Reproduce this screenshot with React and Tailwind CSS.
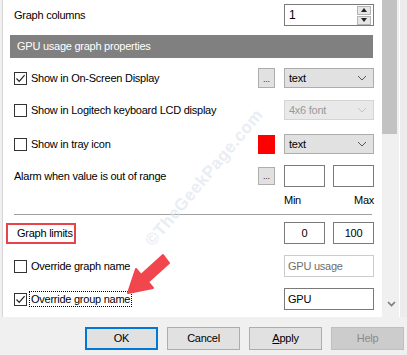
import React from 'react';

const font = { fontFamily: '"Liberation Sans", Arial, sans-serif' };

const Check = ({ checked }) => (
  <div className="w-[13px] h-[13px] border border-[#333333] bg-white flex items-center justify-center shrink-0">
    {checked && (
      <svg width="11" height="11" viewBox="0 0 11 11">
        <path d="M1.5 5.5 L4.2 8.3 L9.6 2.2" fill="none" stroke="#222" strokeWidth="1.2" />
      </svg>
    )}
  </div>
);

const Chevron = ({ color = '#555' }) => (
  <svg width="10" height="6" viewBox="0 0 10 6">
    <path d="M1 1 L5 5 L9 1" fill="none" stroke={color} strokeWidth="1" />
  </svg>
);

const Select = ({ value, disabled }) => (
  <div
    className={`w-[90px] h-[20px] border flex items-center justify-between pl-[4px] pr-[6px] ${
      disabled ? 'bg-[#e9e9e9] border-[#d4d4d4] text-[#9a9a9a]' : 'bg-[#e1e1e1] border-[#adadad] text-black'
    }`}
  >
    <span>{value}</span>
    <Chevron color={disabled ? '#c4c4c4' : '#555'} />
  </div>
);

const Dots = ({ small }) => (
  <div
    className={`w-[17px] ${small ? 'h-[18px]' : 'h-[20px]'} bg-[#e1e1e1] border border-[#adadad] flex items-end justify-center pb-[3px] text-[9px] leading-none text-[#333]`}
  >
    ...
  </div>
);

const Row = ({ left, mid, right, className = '' }) => (
  <div className={`flex items-center ${className}`}>
    <div className="w-[255px] pl-[11px] flex items-center">{left}</div>
    <div className="w-[17px] flex items-center">{mid}</div>
    <div className="ml-[9px] w-[90px] flex items-center">{right}</div>
  </div>
);

const CheckLabel = ({ checked, children }) => (
  <div className="flex items-center gap-[4px]">
    <Check checked={checked} />
    {children}
  </div>
);

const Button = ({ children, variant }) => {
  let cls = 'bg-[#e1e1e1] border border-[#adadad] text-black';
  if (variant === 'focus') cls = 'bg-[#e1e1e1] border-2 border-[#0078d7] text-black';
  if (variant === 'disabled') cls = 'bg-[#cccccc] border border-[#bfbfbf] text-[#8a8a8a]';
  return <div className={`w-[73px] h-[23px] flex items-center justify-center ${cls}`}>{children}</div>;
};

export default function App() {
  return (
    <div
      className="relative w-[407px] h-[355px] bg-[#f0f0f0] overflow-hidden text-[11px] tracking-[-0.25px] text-black"
      style={font}
    >
      <div className="flex h-[317px]">
        {/* property panel */}
        <div className="ml-[2px] w-[380px] border-l border-[#d6d6d6] bg-white">
          <Row
            className="mt-[4px] h-[22px]"
            left={<span>Graph columns</span>}
            right={
              <div className="w-[90px] h-[22px] border border-[#7a7a7a] flex items-center justify-between pl-[4px] pr-[2px] bg-white">
                <span className="text-[12px]">1</span>
                <div className="flex flex-col gap-[1px]">
                  <div className="w-[14px] h-[9px] bg-[#e6e6e6] border border-[#b5b5b5] flex items-center justify-center">
                    <svg width="6" height="4" viewBox="0 0 6 4"><path d="M0 4 L3 0 L6 4 Z" fill="#222" /></svg>
                  </div>
                  <div className="w-[14px] h-[9px] bg-[#e6e6e6] border border-[#b5b5b5] flex items-center justify-center">
                    <svg width="6" height="4" viewBox="0 0 6 4"><path d="M0 0 L3 4 L6 0 Z" fill="#222" /></svg>
                  </div>
                </div>
              </div>
            }
          />

          <div className="mt-[9px] ml-[7px] w-[363px] h-[23px] bg-[#808080] text-white flex items-center pl-[7px]">
            GPU usage graph properties
          </div>

          <Row
            className="mt-[10px] h-[20px]"
            left={<CheckLabel checked>Show in On-Screen Display</CheckLabel>}
            mid={<Dots />}
            right={<Select value="text" />}
          />
          <Row
            className="mt-[12px] h-[20px]"
            left={<CheckLabel>Show in Logitech keyboard LCD display</CheckLabel>}
            right={<Select value="4x6 font" disabled />}
          />
          <Row
            className="mt-[14px] h-[20px]"
            left={<CheckLabel>Show in tray icon</CheckLabel>}
            mid={<div className="w-[17px] h-[19px] bg-[#ff0000]" />}
            right={<Select value="text" />}
          />
          <Row
            className="mt-[11px] h-[22px]"
            left={<span>Alarm when value is out of range</span>}
            mid={<Dots small />}
            right={
              <div className="flex gap-[8px]">
                <div className="w-[41px] h-[22px] border border-[#7a7a7a] bg-white" />
                <div className="w-[41px] h-[22px] border border-[#7a7a7a] bg-white" />
              </div>
            }
          />
          <Row
            className="mt-[5px] h-[16px]"
            right={
              <div className="w-[90px] flex justify-between">
                <span>Min</span>
                <span>Max</span>
              </div>
            }
          />

          <div className="mt-[6px] ml-[11px] w-[358px] h-px bg-[#a0a0a0]" />

          <div className="mt-[7px] h-[22px] flex items-center">
            <div className="w-[255px] pl-[3px]">
              <div className="w-[70px] h-[21px] border-2 border-[#e8424b] flex items-center pl-[9px]">
                Graph limits
              </div>
            </div>
            <div className="w-[17px]" />
            <div className="ml-[9px] flex gap-[8px]">
              <div className="w-[41px] h-[22px] border border-[#7a7a7a] bg-white flex items-center justify-center">0</div>
              <div className="w-[41px] h-[22px] border border-[#7a7a7a] bg-white flex items-center justify-center">100</div>
            </div>
          </div>

          <Row
            className="mt-[11px] h-[22px]"
            left={<CheckLabel>Override graph name</CheckLabel>}
            right={
              <div className="w-[90px] h-[22px] border border-[#cccccc] bg-white flex items-center pl-[3px] text-[#6d6d6d]">
                GPU usage
              </div>
            }
          />
          <Row
            className="mt-[11px] h-[22px]"
            left={
              <div className="flex items-center gap-[2px]">
                <Check checked />
                <span className="border border-dotted border-black px-[1px] leading-[14px]">Override group name</span>
              </div>
            }
            right={
              <div className="w-[90px] h-[22px] border border-[#7a7a7a] bg-white flex items-center pl-[3px]">GPU</div>
            }
          />
        </div>

        {/* scrollbar */}
        <div className="w-[17px] bg-[#f0f0f0] flex flex-col justify-between">
          <div className="w-[15px] h-[134px] bg-[#c2c2c2]" />
          <div className="h-[16px] flex items-start justify-center pl-[1px]">
            <svg width="9" height="6" viewBox="0 0 9 6">
              <path d="M1 1 L4.5 4.5 L8 1" fill="none" stroke="#7a7a7a" strokeWidth="1.6" />
            </svg>
          </div>
        </div>
        <div className="flex-1 border-l border-white bg-[#ececec]" />
      </div>

      {/* dialog buttons */}
      <div className="mt-[10px] flex gap-[9px] pl-[85px]">
        <Button variant="focus">OK</Button>
        <Button>Cancel</Button>
        <Button>
          <span className="underline">A</span>pply
        </Button>
        <Button variant="disabled">Help</Button>
      </div>

      {/* watermark */}
      <div className="absolute left-[118px] top-[165px] -rotate-[50deg] text-[17px] font-bold tracking-[0.5px] text-[#dbe3ee] opacity-60 pointer-events-none whitespace-nowrap">
        ©TheGeekPage.com
      </div>

      {/* red annotation arrow */}
      <svg className="absolute left-0 top-0 pointer-events-none" width="407" height="355">
        <polygon
          points="128,293 153,288 148,282 169,263 163,255 141,275 136,269"
          fill="#f2464f"
          stroke="#f2464f"
          strokeWidth="2"
          strokeLinejoin="round"
        />
      </svg>
    </div>
  );
}
